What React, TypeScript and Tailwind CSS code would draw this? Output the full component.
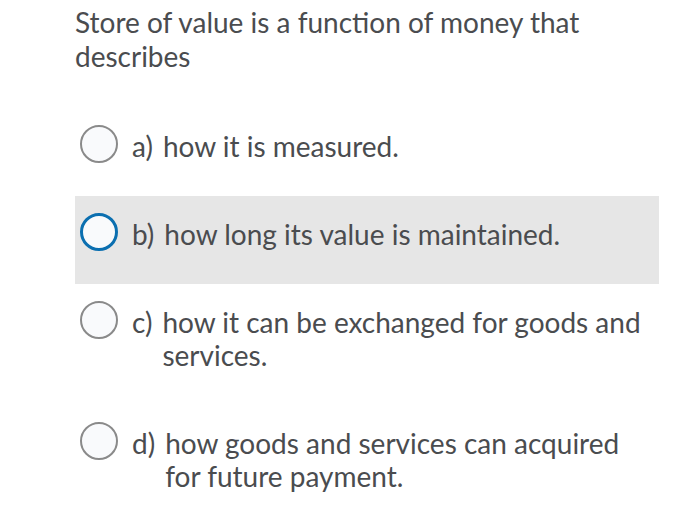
import React from "react";

const options = [
  { label: "a)", text: "how it is measured.", selected: false },
  { label: "b)", text: "how long its value is maintained.", selected: true },
  { label: "c)", text: "how it can be exchanged for goods and services.", selected: false },
  { label: "d)", text: "how goods and services can acquired for future payment.", selected: false },
];

export default function App() {
  return (
    <div
      className="w-[700px] h-[529px] bg-white overflow-hidden text-[#4a4c4f]"
      style={{ fontFamily: "Lato, 'Open Sans', sans-serif" }}
    >
      <div className="pl-[75px] pt-[5px] w-[659px]">
        <p className="text-[28px] leading-[34px] pr-[40px]">
          Store of value is a function of money that describes
        </p>
        <div className="mt-[35px] flex flex-col">
          {options.map((o) => (
            <div
              key={o.label}
              className={`flex items-start pl-[5px] pt-[22px] pb-[33px] pr-[16px] ${
                o.selected ? "bg-[#e6e6e6]" : ""
              }`}
            >
              <div
                className={`shrink-0 w-[38px] h-[38px] rounded-full bg-[#f9fafc] -mt-[5px] ${
                  o.selected ? "border-[3px] border-[#0b6fb0]" : "border-2 border-[#8a8a8a]"
                }`}
              />
              <div className="ml-[14px] flex text-[28px] leading-[33px]">
                <span className="shrink-0">{o.label}</span>
                <span className="ml-[10px]">{o.text}</span>
              </div>
            </div>
          ))}
        </div>
      </div>
    </div>
  );
}
